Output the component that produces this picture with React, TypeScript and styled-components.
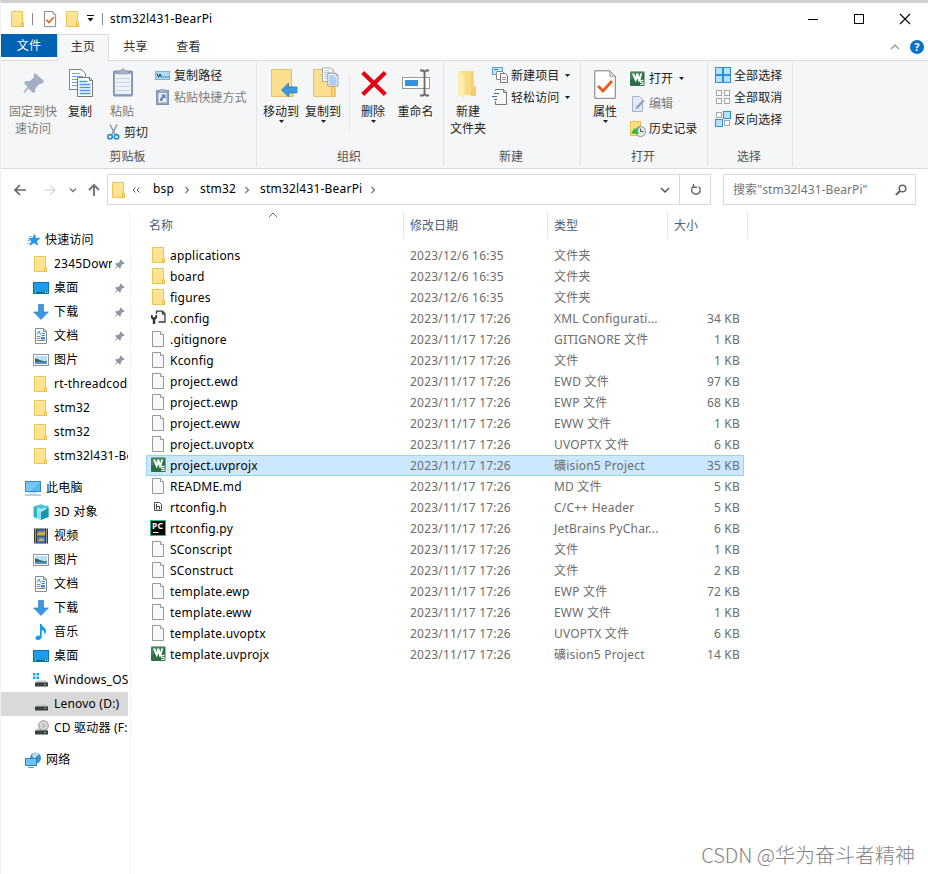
import React from 'react';
import styled, { createGlobalStyle, css } from 'styled-components';

const Global = createGlobalStyle`
  * { box-sizing: border-box; }
  body {
    margin: 0;
    background: #fff;
    font: 12px/17px "Noto Sans", "Noto Sans CJK SC", sans-serif;
    letter-spacing: 0.2px;
    color: #000;
    overflow: hidden;
  }
`;

/* ---------- icons ---------- */

const Svg = styled.svg`
  display: block;
  flex: none;
  overflow: visible;
`;

type IconProps = { w?: number; h?: number };

const FolderIcon = ({ w = 16, h = 16 }: IconProps) => (
  <Svg width={w} height={h} viewBox="0 0 16 16">
    <path d="M1.5.5h11v10.2l1 .6v4.2h-12z" fill="#ffe392" stroke="#edc44e" />
    <path d="M2 1h10v2H2z" fill="#ffe9a8" />
    <path d="M11.5 15.5v-4l1-1 1 1v4z" fill="#ffe08a" stroke="#e9bd43" />
  </Svg>
);

const FileIcon = () => (
  <Svg width={16} height={16} viewBox="0 0 16 16">
    <path d="M1.5.5h8l3 3v12h-11z" fill="#f8f9fa" stroke="#999" />
    <path d="M9.500.5v3h3" fill="#fff" stroke="#999" />
  </Svg>
);

const ConfigIcon = () => (
  <Svg width={16} height={16} viewBox="0 0 16 16">
    <path d="M5.500 4V1.200h6L14 3.700V12H7.500" fill="#f5f5f5" stroke="#3c3c3c" strokeWidth="1.300" />
    <path d="M10.800 1v3.400H14z" fill="#3c3c3c" />
    <path d="M0 5v2.200C0 9 1.800 9.600 1.800 9.600V14h2.400V9.600S6 9 6 7.200V5L4.300 5v2.200H1.700V5z" fill="#333" />
  </Svg>
);

const KeilIcon = () => (
  <Svg width={16} height={16} viewBox="0 0 16 16">
    <rect x="0" y="0.500" width="14.500" height="14.500" rx="1" fill="#2c6e45" />
    <path d="M0 1h14.500L9 6 0 9z" fill="#5b9570" opacity=".55" />
    <path d="M2 2.500h2.300l1 3.800L6.300 2.500h2L9.300 6.300l1-3.800h2L10.300 9 8.800 11.500 7.300 7.300 5.800 11.500z" fill="#fff" />
    <path d="M13.500 9.300h-3v2h2.500v2.200h-3" fill="none" stroke="#e8f3ea" strokeWidth="1.200" />
  </Svg>
);

const HeaderFileIcon = () => (
  <Svg width={16} height={16} viewBox="0 0 16 16">
    <path d="M3.500 3.500h5l2 2v6h-7z" fill="#fff" stroke="#4f4f4f" />
    <path d="M5.500 5v5.500M5.500 7.500h3v3" fill="none" stroke="#3f3f3f" />
  </Svg>
);

const IconText = styled.text`
  font-family: "Noto Sans", sans-serif;
  letter-spacing: 0;
`;

const PyCharmIcon = () => (
  <Svg width={16} height={16} viewBox="1 0 16 16">
    <rect x="0.500" y="0.500" width="15" height="15" fill="#000" stroke="#21c58b" />
    <IconText x="2" y="8.800" fontSize="8.500" fontWeight="700" fill="#fff" textLength="11">PC</IconText>
    <path d="M3 12.500h5.500" stroke="#fff" />
  </Svg>
);

const PinIcon = () => (
  <Svg width={11} height={11} viewBox="0 0 11 11">
    <path d="M6.500.5 10.500 4.300 9.700 5 8.800 4.900 6.900 6.900 6.700 8.900 5.800 9.600 3.600 7.500.7 10.500.3 10.200 3 7 1.200 5.100 1.900 4.300 4.200 4.100 6 2.200 5.800 1.200z" fill="#8b97a3" />
  </Svg>
);

const StarIcon = () => (
  <Svg width={16} height={16} viewBox="-1 0 16 16">
    <path d="M8.300 2.500l1.400 3.700 4.200.1-3.400 2.600 1.200 4.200-3.700-2.400-4 2.600 1.500-4.200L2.600 6.300h4.100z" fill="#1b9af0" stroke="#1280cf" strokeWidth=".6" />
    <path d="M3 4.500h3M1.500 8.500H5M1 11.500h3" stroke="#7fc4f2" />
  </Svg>
);

const DesktopIcon = () => (
  <Svg width={16} height={16} viewBox="0 0 16 16">
    <rect x="0.500" y="2.500" width="15" height="11" fill="#1e9cf4" stroke="#0a6fbe" />
    <path d="M1 12.500h14" stroke="#0f5fa5" />
    <path d="M2 12.500h1M12 12.500h1M14 12.500h1" stroke="#fff" />
  </Svg>
);

const DownloadIcon = () => (
  <Svg width={16} height={16} viewBox="0 0 16 16">
    <path d="M5.500.5h5V8h4.800L8 15.500.7 8h4.800z" fill="#3f97e0" stroke="#2f80c8" strokeWidth=".7" />
  </Svg>
);

const DocIcon = () => (
  <Svg width={16} height={16} viewBox="0 0 16 16">
    <path d="M2.500.5h8l3 3v12h-11z" fill="#fff" stroke="#838b92" />
    <path d="M10.500.5v3h3" fill="none" stroke="#838b92" />
    <path d="M4 6.500l2-3.500 1.500 3.500M8.500 5.500H12M8.500 7.500H12" stroke="#3f8fd0" fill="none" />
    <path d="M4 8.500h3.500M4 10.500h3.500M4 12.500h8" stroke="#7c868f" />
    <path d="M8 9h4v2.500H8z" fill="#3f8fd0" />
  </Svg>
);

const PictureIcon = () => (
  <Svg width={16} height={16} viewBox="0 0 16 16">
    <rect x="0.500" y="2.500" width="15" height="11" fill="#fff" stroke="#8f9499" />
    <path d="M2 4h12v8H2z" fill="#b9dcf4" />
    <path d="M2 6.500c3 0 4 2.500 12 3V12H2z" fill="#2c6470" />
    <path d="M2 10c4-.5 8 0 12 .3V12H2z" fill="#5c94c0" />
  </Svg>
);

const PcIcon = () => (
  <Svg width={17} height={16} viewBox="0 0 17 16">
    <rect x="0.500" y="1.500" width="15" height="10" fill="#54b8f5" stroke="#3d8cc0" />
    <path d="M1 2h14L6 11H1z" fill="#8ad2fa" opacity=".6" />
    <path d="M4 12h8v1.500H4z" fill="#d4dae0" />
    <path d="M0 15h16" stroke="#6a9fc8" />
  </Svg>
);

const CubeIcon = () => (
  <Svg width={16} height={16} viewBox="0 0 16 16">
    <path d="M.5 2.500 8 .5l7.500 2v10.500L8 15.700.5 13z" fill="#2fb4cc" />
    <path d="M.5 2.500 8 .5l7.500 2L8 5z" fill="#4fc5d8" />
    <path d="M4 3.500 8 5l4-1.500 3 2L8 9 4 7z" fill="#a9e8f0" />
    <path d="M4 5.500 8 8v7.700l-4-1.500z" fill="#8fe0ea" />
    <path d="M8 8l7.500-4v9L8 15.700z" fill="#1a93b0" />
  </Svg>
);

const VideoIcon = () => (
  <Svg width={16} height={16} viewBox="0 0 16 16">
    <path d="M1 .5h14v15H1z" fill="#3a3a3a" />
    <path d="M4 1.500h8v6H4z" fill="#3d6fc4" />
    <path d="M4 8.500h8v6H4z" fill="#3f7fd2" />
    <path d="M4 5.500l3-2 2 1 3-2v5H4zM5 12l3-2 3 1v2H6z" fill="#d8a73d" />
    <path d="M2.500 1.500v14M13.500 1.500v14" stroke="#fff" strokeDasharray="1 1" />
  </Svg>
);

const MusicIcon = () => (
  <Svg width={16} height={16} viewBox="0 0 16 16">
    <path d="M7 0h1.600c.3 3 4.900 4 4.400 7.500-.1 1.500-.8 2.500-1.600 3.500.6-2.700-.4-4-2.600-5v6.800C8.800 14.800 7 16 5 16s-2.800-1.200-2.500-2.300C2.800 12 5 11 7 11.600z" fill="#139af0" />
  </Svg>
);

const DriveIcon = ({ kind }: { kind: 'os' | 'disk' | 'cd' }) => (
  <Svg width={16} height={16} viewBox="0 0 16 16">
    {kind === 'os' && <path d="M0 1h2.500v2.500H0zM3.500 1H6v2.500H3.500zM0 4.500h2.500V7H0zM3.500 4.500H6V7H3.500z" fill="#14a8e8" />}
    <path d="M4 8.500h9.500L15 11H2z" fill="#c6c6c6" />
    {kind === 'cd' && (
      <>
        <circle cx="10.500" cy="5.500" r="4.800" fill="#dcdcdc" stroke="#8e8e8e" />
        <circle cx="10.500" cy="5.500" r="1.500" fill="#fff" stroke="#8e8e8e" />
      </>
    )}
    <rect x="2" y="10.500" width="13" height="4" fill="#3b3f42" />
    <path d="M11 12.500h2" stroke="#35e04c" />
  </Svg>
);

const NetworkIcon = () => (
  <Svg width={17} height={16} viewBox="0 0 17 16">
    <circle cx="10.500" cy="6" r="5.500" fill="#3d8fcf" />
    <path d="M7 3c2-3 6-2 7-1-1 2-2 1-3 3s-3 2-4-2z" fill="#b9dff5" />
    <rect x="0.500" y="6.500" width="11" height="7" fill="#6cc3f5" stroke="#2f80bd" />
    <path d="M3 15.500h6" stroke="#5f9cc9" />
  </Svg>
);

const CheckDocIcon = ({ w = 12, h = 15 }: IconProps) => (
  <Svg width={w} height={h} viewBox="0 0 22 29" preserveAspectRatio="none">
    <path d="M.8.8h15l5.500 5.500v22H.8z" fill="#fff" stroke="#7c7c7c" strokeWidth={w < 15 ? 1.700 : 1} />
    <path d="M15.800.8v5.500h5.500z" fill="#ddd" stroke="#8c8c8c" strokeWidth=".8" />
    <path d="M4 16l5 5 9-10" fill="none" stroke="#ea5b1c" strokeWidth="2.800" />
  </Svg>
);

const BigPinIcon = () => (
  <Svg width={32} height={32} viewBox="0 0 32 32">
    <path d="M18 5 27 13 25.500 15.500 22.500 16 18.500 20 18 24 16 25 11.500 20.500 7.500 24.800H6.800V23.500L10.500 19 7 15 8.500 13 13 13 17.500 9 16.500 7z" fill="#a2b0c6" />
  </Svg>
);

const CopyPages = () => (
  <>
    <path d="M1.500 1.500h12l4 4v16h-16z" fill="#fff" stroke="#808080" />
    <path d="M4 5.500h8M4 8.500h11M4 11.500h11M4 14.500h11M4 17.500h11" stroke="#6aa5e8" />
    <path d="M9.500 9.500h12l3 3v16h-15z" fill="#fff" stroke="#777" />
    <path d="M21.500 9.500v3h3" fill="none" stroke="#777" />
    <path d="M11.500 13.500h8M11.500 16.500h11M11.500 19.500h11M11.500 22.500h11M11.500 25.500h11" stroke="#4593ec" strokeWidth="1.300" />
  </>
);

const CopyIcon = () => (
  <Svg width={32} height={32} viewBox="-4 0 32 32"><CopyPages /></Svg>
);

const PasteIcon = () => (
  <Svg width={32} height={32} viewBox="-1 0 32 32">
    <rect x="6.500" y="3" width="19" height="25" rx="1" fill="#8fa2c4" stroke="#7e91b4" />
    <path d="M8 6h16v20H8z" fill="#eef3fb" />
    <path d="M9 10.500h14M9 14.500h14M9 18.500h14M9 22.500h14" stroke="#c9d6ea" />
    <path d="M11 6V3h3c0-3 4-3 4 0h3v3z" fill="#aab3c2" stroke="#8d98aa" strokeWidth=".6" />
  </Svg>
);

const ScissorsIcon = () => (
  <Svg width={13} height={17} viewBox="0 0 13 17">
    <path d="M3 .5 8 10.500M10 .5 5 10.500" stroke="#8c98a3" strokeWidth="1.500" />
    <circle cx="3.100" cy="12.800" r="2.200" fill="none" stroke="#2389c9" strokeWidth="1.600" />
    <circle cx="9.500" cy="12.800" r="2.200" fill="none" stroke="#2389c9" strokeWidth="1.600" />
  </Svg>
);

const PathIcon = () => (
  <Svg width={16} height={16} viewBox="0 0 16 16">
    <rect x="0.500" y="4.500" width="14" height="8" fill="#a9dcf9" stroke="#7fb4d6" />
    <path d="M2 6.500l1.500 4L5 7 6.500 10.500M8 10h1.200M10.300 10h1.200M12.500 10h1.200" fill="none" stroke="#1c3550" />
  </Svg>
);

const ShortcutIcon = () => (
  <Svg width={16} height={16} viewBox="0 0 16 16">
    <rect x="1.500" y="1.500" width="12" height="14" fill="#8fa2c4" stroke="#8093b5" />
    <path d="M3.500 4h8v9.500h-8z" fill="#eef3fa" />
    <path d="M5 3V0h5v3z" fill="#a7b1c2" />
    <path d="M5 12c0-3 .8-4 2.300-4.800L6 5.500h4.500V10L9 8.700C8 9.300 7.500 10 7.500 12z" fill="#6b83b0" />
  </Svg>
);

const BigFolder = () => (
  <>
    <path d="M1.500 1.500h20V18l1.500 1v9.500H1.500z" fill="#fbdf8e" stroke="#e8c35c" />
    <path d="M19.500 28.500V20l1.500-2 2 2v8.500z" fill="#f9d66f" stroke="#e3ba4a" />
  </>
);

const MoveIcon = () => (
  <Svg width={32} height={32} viewBox="-5 0 32 32">
    <BigFolder />
    <path d="M11.500 22 18.500 15v4H27v6h-8.500v4z" fill="#3d97e3" stroke="#2579c2" strokeWidth=".7" />
  </Svg>
);

const CopyToIcon = () => (
  <Svg width={32} height={32} viewBox="-5 0 32 32">
    <BigFolder />
    <g transform="translate(9.500 -1) scale(.67)"><CopyPages /></g>
  </Svg>
);

const DeleteIcon = () => (
  <Svg width={32} height={32} viewBox="-1 0 32 32">
    <path d="M4.700 4.500 27.300 26.500M27.300 4.500 4.700 26.500" stroke="#e30513" strokeWidth="4.300" />
  </Svg>
);

const RenameIcon = () => (
  <Svg width={32} height={32} viewBox="0 0 32 32">
    <rect x="2.500" y="9.500" width="27" height="11" fill="#fff" stroke="#999" />
    <rect x="5" y="12" width="13" height="6" fill="#3193e6" />
    <path d="M20 2.500h3l1.500 1.500L26 2.500h3M24.500 3.500v23M20 27.500h3l1.500-1.500 1.500 1.500h3" fill="none" stroke="#686868" strokeWidth="1.800" />
  </Svg>
);

const NewFolderIcon = () => (
  <Svg width={32} height={32} viewBox="0 0 32 32">
    <path d="M7 3h14v24H7z" fill="#fbdc82" />
    <path d="M19 3h2.500v15H24v10h-5z" fill="#f6cf6b" />
    <path d="M6 3l6.500 3.500V30L6 27z" fill="#ffedb0" />
  </Svg>
);

const NewItemIcon = () => (
  <Svg width={17} height={16} viewBox="0 0 17 16">
    <rect x="0.500" y="0.500" width="10" height="7" fill="#bfe3f8" stroke="#5e9cc4" />
    <path d="M4.500 4.500h6l2 2v6h-8z" fill="#fff" stroke="#8b8b8b" />
    <path d="M8.500 6.500h5l2 2v7h-7z" fill="#fff" stroke="#777" />
    <path d="M10 10.500h4M10 12.500h4" stroke="#e3807d" />
    <path d="M2 2.500h4" stroke="#3485c4" />
  </Svg>
);

const EasyAccessIcon = () => (
  <Svg width={17} height={16} viewBox="0 0 17 16">
    <path d="M3.500 1.500V.5h8l3 3v12h-11V12" fill="#fafafa" stroke="#777" />
    <path d="M11.500.5v3h3" fill="none" stroke="#777" />
    <path d="M2 4.500h5M0 7.500h5M2 10.500h3" stroke="#2e6da9" strokeWidth="1.200" />
  </Svg>
);

const EditIcon = () => (
  <Svg width={16} height={16} viewBox="0 0 16 16">
    <path d="M2.500.5h7l3 3v12h-10z" fill="#e5ebf4" stroke="#a4b1c8" />
    <path d="M5 14 6.500 10.500 13 3.500 14.500 5 8.500 12z" fill="#8ba1c6" />
  </Svg>
);

const HistoryIcon = () => (
  <Svg width={16} height={16} viewBox="0 0 16 16">
    <path d="M.5.5h10v14H.5z" fill="#ffe07e" stroke="#e9c14f" />
    <circle cx="10.500" cy="10.500" r="5" fill="#e7e9ea" stroke="#8b8f93" />
    <path d="M10.500 7.500v3h3" stroke="#555" fill="none" />
    <path d="M1 12.500 4.500 7l1.500 2c1.500-3 4-3.500 5-3.200C8.500 6.500 8 8.500 7.700 11L9.500 13z" fill="#2fb247" />
  </Svg>
);

const gridCells = [[0.5, 0.5], [8.5, 0.5], [0.5, 8.5], [8.5, 8.5]];

const SelectIcon = ({ on }: { on: boolean[] }) => (
  <Svg width={16} height={16} viewBox="0 0 16 16">
    {gridCells.map(([x, y], i) =>
      on[i] ? (
        <rect key={i} x={x} y={y} width="7" height="7" fill="#b4e2fc" stroke="#2e8fdd" />
      ) : (
        <rect key={i} x={x + 1} y={y + 1} width="5" height="5" fill="#fff" stroke="#a6a6a6" />
      ),
    )}
  </Svg>
);

const Chevron = ({ dir, color = '#555', size = 8, stroke = 1.3 }: { dir: 'up' | 'down' | 'right'; color?: string; size?: number; stroke?: number }) => (
  <Svg width={size} height={size} viewBox="0 0 8 8">
    <path
      d={dir === 'up' ? 'M0 6l4-4 4 4' : dir === 'down' ? 'M0 2l4 4 4-4' : 'M2.500 1l3 3-3 3'}
      fill="none"
      stroke={color}
      strokeWidth={stroke}
    />
  </Svg>
);

const Arrow = ({ dir, color }: { dir: 'left' | 'right' | 'up'; color: string }) => (
  <Svg width={14} height={14} viewBox="0 0 14 14">
    <path
      d={dir === 'left' ? 'M13 7H2M7 2 2 7l5 5' : dir === 'right' ? 'M1 7h11M7 2l5 5-5 5' : 'M7 13V2M2 7l5-5 5 5'}
      fill="none"
      stroke={color}
      strokeWidth={dir === 'up' ? 2 : 1.700}
    />
  </Svg>
);

const Caret = () => (
  <Svg width={5} height={3} viewBox="0 0 5 3"><path d="M0 0h5L2.500 3z" fill="#1d1d1d" /></Svg>
);

/* ---------- window frame ---------- */

const Window = styled.div`
  width: 928px;
  height: 874px;
  display: flex;
  flex-direction: column;
  border-top: 3px solid #cfd0d2;
  border-left: 1px solid #f0f0f0;
  background: #fff;
  white-space: nowrap;
`;

const TitleBar = styled.header`
  height: 31px;
  display: flex;
  align-items: center;
  padding-left: 9px;
`;

const TitleDivider = styled.span<{ $gap: string }>`
  width: 1px;
  height: 12px;
  margin: ${(p) => p.$gap};
  background: #8a8a8a;
`;

const Gap = styled.span<{ $w: number }>`
  width: ${(p) => p.$w}px;
`;

const WindowControls = styled.div`
  display: flex;
  margin-left: auto;
`;

const ControlButton = styled.span`
  width: 46px;
  height: 30px;
  display: grid;
  place-items: center;
`;

const Tabs = styled.nav`
  height: 27px;
  display: flex;
  align-items: flex-start;
  border-bottom: 1px solid #dadbdc;
`;

const Tab = styled.span<{ $kind?: 'file' | 'active' }>`
  width: 53px;
  height: 24px;
  line-height: 26px;
  text-align: center;
  color: #333;
  ${(p) => p.$kind === 'file' && css`
    width: 56px;
    height: 23px;
    line-height: 24px;
    background: #0063b1;
    color: #fff;
  `}
  ${(p) => p.$kind === 'active' && css`
    width: 52px;
    height: 27px;
    background: #f5f6f7;
    border: 1px solid #dadbdc;
    border-bottom: 0;
    line-height: 24px;
  `}
`;

const TabTools = styled.div`
  display: flex;
  align-items: center;
  gap: 11px;
  height: 26px;
  margin: 0 4px 0 auto;
`;

const HelpBadge = styled.span`
  width: 14px;
  height: 14px;
  border-radius: 50%;
  background: #0a70cc;
  color: #fff;
  font-weight: 700;
  font-size: 11px;
  line-height: 14px;
  text-align: center;
`;

const Ribbon = styled.section`
  height: 108px;
  display: flex;
  background: #f5f6f7;
  border-bottom: 1px solid #dadbdc;
`;

const Group = styled.div<{ $w: number }>`
  width: ${(p) => p.$w}px;
  height: 103px;
  margin-top: 2px;
  display: flex;
  flex-direction: column;
  border-right: 1px solid #e2e3e4;
`;

const GroupBody = styled.div<{ $pad: number }>`
  height: 85px;
  display: flex;
  align-items: flex-start;
  padding-left: ${(p) => p.$pad}px;
`;

const GroupLabel = styled.span`
  padding-right: 2px;
  text-align: center;
  color: #505050;
  letter-spacing: 0;
`;

const Big = styled.div<{ $w: number; $off?: boolean }>`
  width: ${(p) => p.$w}px;
  flex: none;
  display: flex;
  flex-direction: column;
  align-items: center;
  padding-top: 5px;
  letter-spacing: 0;
  text-align: center;
  color: ${(p) => (p.$off ? '#7a7a7a' : '#222')};
`;

const BigLabel = styled.span`
  margin-top: 3px;
  white-space: pre;
`;

const SmallList = styled.div<{ $top: number; $row: number }>`
  display: grid;
  grid-auto-rows: ${(p) => p.$row}px;
  align-items: center;
  padding-top: ${(p) => p.$top}px;
`;

const Small = styled.div<{ $off?: boolean; $gap?: number }>`
  display: flex;
  align-items: center;
  gap: ${(p) => p.$gap ?? 3}px;
  letter-spacing: 0.1px;
  color: ${(p) => (p.$off ? '#7a7a7a' : '#222')};
`;

const PasteColumn = styled.div`
  width: 54px;
  flex: none;
  display: flex;
  flex-direction: column;
`;

const CutRow = styled.div`
  display: flex;
  align-items: center;
  gap: 4px;
  height: 18px;
  margin-top: 3px;
  padding-left: 6px;
  letter-spacing: 0;
  color: #222;
`;

const ButtonDivider = styled.span<{ $gap: string }>`
  width: 1px;
  height: 55px;
  margin: ${(p) => p.$gap};
  background: #e2e3e4;
`;

/* ---------- address row ---------- */

const AddressRow = styled.div`
  height: 42px;
  display: flex;
  align-items: flex-start;
  padding: 5px 12px 0 12px;
`;

const NavButtons = styled.div`
  width: 94px;
  height: 31px;
  display: flex;
  align-items: center;
`;

const AddressBox = styled.div`
  width: 604px;
  height: 31px;
  display: flex;
  align-items: center;
  border: 1px solid #d9d9d9;
  padding-left: 3px;
`;

const Crumb = styled.span<{ $w: number }>`
  width: ${(p) => p.$w}px;
  padding-bottom: 2px;
`;

const BoxTools = styled.div`
  margin-left: auto;
  height: 29px;
  display: flex;
  align-items: center;
  gap: 10px;
`;

const Refresh = styled.span`
  width: 31px;
  height: 29px;
  display: grid;
  place-items: center;
  border-left: 1px solid #d9d9d9;
`;

const SearchBox = styled.div`
  width: 193px;
  height: 31px;
  margin-left: 12px;
  padding: 0 8px 0 9px;
  display: flex;
  align-items: center;
  justify-content: space-between;
  border: 1px solid #d9d9d9;
  letter-spacing: 0.08px;
  color: #757575;
`;

/* ---------- body ---------- */

const Body = styled.div`
  flex: 1;
  display: flex;
`;

const Sidebar = styled.aside`
  width: 130px;
  padding-top: 17px;
  border-right: 1px solid #f3f3f3;
  overflow: hidden;
`;

const Section = styled.div`
  margin-bottom: 8px;
`;

const SideRow = styled.div<{ $root?: boolean; $active?: boolean }>`
  width: 127px;
  height: 24px;
  display: flex;
  align-items: center;
  gap: ${(p) => (p.$root ? 4 : 5)}px;
  padding-left: ${(p) => (p.$root ? 24 : 32)}px;
  overflow: hidden;
  background: ${(p) => (p.$active ? '#d9d9d9' : 'transparent')};
`;

const SideText = styled.span<{ $pinned?: boolean }>`
  padding-bottom: 1px;
  overflow: hidden;
  ${(p) => p.$pinned && css`
    width: 58px;
    flex: none;
    margin-right: -3px;
  `}
`;

const Main = styled.main`
  flex: 1;
  padding-left: 15px;
  position: relative;
`;

const HeaderRow = styled.div`
  width: 602px;
  height: 28px;
  display: grid;
  grid-template-columns: 258px 144px 120px 80px;
  color: #4c607a;
`;

const HeaderCell = styled.span<{ $first?: boolean }>`
  border-right: 1px solid #e5e5e5;
  padding: 6px 0 0 ${(p) => (p.$first ? 3 : 6)}px;
  letter-spacing: 0;
`;

const SortMark = styled.span`
  position: absolute;
  left: 138px;
  top: 0;
`;

const Rows = styled.div`
  padding-top: 6px;
`;

const Row = styled.div<{ $selected?: boolean }>`
  width: 598px;
  height: 21px;
  display: grid;
  grid-template-columns: 257px 144px 120px 73px;
  align-items: center;
  box-shadow: ${(p) => (p.$selected ? 'inset 0 0 0 1px #99d1ff' : 'none')};
  background: ${(p) => (p.$selected ? '#cce8ff' : 'transparent')};
`;

const NameCell = styled.span`
  display: flex;
  align-items: flex-start;
  gap: 3px;
  padding: 2px 0 0 5px;
  height: 21px;
`;

const MetaCell = styled.span<{ $right?: boolean }>`
  padding-left: 7px;
  color: #6d6d6d;
  text-align: ${(p) => (p.$right ? 'right' : 'left')};
`;

const Watermark = styled.div`
  position: absolute;
  right: 13px;
  bottom: 4px;
  font: 300 20px/30px "Noto Sans CJK SC", sans-serif;
  letter-spacing: 0;
  color: #858585;
`;

/* ---------- data ---------- */

type SideItem = { label: string; icon: React.ReactNode; pinned?: boolean; active?: boolean };
type SideSection = { label: string; icon: React.ReactNode; items: SideItem[] };

const sections: SideSection[] = [
  {
    label: '快速访问',
    icon: <StarIcon />,
    items: [
      { label: '2345Downloads', icon: <FolderIcon />, pinned: true },
      { label: '桌面', icon: <DesktopIcon />, pinned: true },
      { label: '下载', icon: <DownloadIcon />, pinned: true },
      { label: '文档', icon: <DocIcon />, pinned: true },
      { label: '图片', icon: <PictureIcon />, pinned: true },
      { label: 'rt-threadcode', icon: <FolderIcon /> },
      { label: 'stm32', icon: <FolderIcon /> },
      { label: 'stm32', icon: <FolderIcon /> },
      { label: 'stm32l431-BearPi', icon: <FolderIcon /> },
    ],
  },
  {
    label: '此电脑',
    icon: <PcIcon />,
    items: [
      { label: '3D 对象', icon: <CubeIcon /> },
      { label: '视频', icon: <VideoIcon /> },
      { label: '图片', icon: <PictureIcon /> },
      { label: '文档', icon: <DocIcon /> },
      { label: '下载', icon: <DownloadIcon /> },
      { label: '音乐', icon: <MusicIcon /> },
      { label: '桌面', icon: <DesktopIcon /> },
      { label: 'Windows_OS', icon: <DriveIcon kind="os" /> },
      { label: 'Lenovo (D:)', icon: <DriveIcon kind="disk" />, active: true },
      { label: 'CD 驱动器 (F:)', icon: <DriveIcon kind="cd" /> },
    ],
  },
  { label: '网络', icon: <NetworkIcon />, items: [] },
];

const icons = {
  folder: <FolderIcon />,
  file: <FileIcon />,
  config: <ConfigIcon />,
  keil: <KeilIcon />,
  header: <HeaderFileIcon />,
  pycharm: <PyCharmIcon />,
};

const D1 = '2023/12/6 16:35';
const D2 = '2023/11/17 17:26';

const files: [keyof typeof icons, string, string, string, string][] = [
  ['folder', 'applications', D1, '文件夹', ''],
  ['folder', 'board', D1, '文件夹', ''],
  ['folder', 'figures', D1, '文件夹', ''],
  ['config', '.config', D2, 'XML Configurati...', '34 KB'],
  ['file', '.gitignore', D2, 'GITIGNORE 文件', '1 KB'],
  ['file', 'Kconfig', D2, '文件', '1 KB'],
  ['file', 'project.ewd', D2, 'EWD 文件', '97 KB'],
  ['file', 'project.ewp', D2, 'EWP 文件', '68 KB'],
  ['file', 'project.eww', D2, 'EWW 文件', '1 KB'],
  ['file', 'project.uvoptx', D2, 'UVOPTX 文件', '6 KB'],
  ['keil', 'project.uvprojx', D2, '礦ision5 Project', '35 KB'],
  ['file', 'README.md', D2, 'MD 文件', '5 KB'],
  ['header', 'rtconfig.h', D2, 'C/C++ Header', '5 KB'],
  ['pycharm', 'rtconfig.py', D2, 'JetBrains PyChar...', '6 KB'],
  ['file', 'SConscript', D2, '文件', '1 KB'],
  ['file', 'SConstruct', D2, '文件', '2 KB'],
  ['file', 'template.ewp', D2, 'EWP 文件', '72 KB'],
  ['file', 'template.eww', D2, 'EWW 文件', '1 KB'],
  ['file', 'template.uvoptx', D2, 'UVOPTX 文件', '6 KB'],
  ['keil', 'template.uvprojx', D2, '礦ision5 Project', '14 KB'],
];

/* ---------- views ---------- */

type BigButtonProps = { icon: React.ReactNode; label: string; w: number; off?: boolean; menu?: boolean };

const BigButton = ({ icon, label, w, off, menu }: BigButtonProps) => (
  <Big $w={w} $off={off}>
    {icon}
    <BigLabel>{label}</BigLabel>
    {menu && <Caret />}
  </Big>
);

const IconFrame = styled.span`
  width: 32px;
  height: 32px;
  display: grid;
  place-items: center;
`;

const PropertiesIcon = () => (
  <IconFrame><CheckDocIcon w={22} h={29} /></IconFrame>
);

const RibbonView = () => (
  <Ribbon>
    <Group $w={256}>
      <GroupBody $pad={6}>
        <BigButton icon={<BigPinIcon />} label={'固定到快\n速访问'} w={52} off />
        <BigButton icon={<CopyIcon />} label="复制" w={42} />
        <PasteColumn>
          <BigButton icon={<PasteIcon />} label="粘贴" w={42} off />
          <CutRow><ScissorsIcon />剪切</CutRow>
        </PasteColumn>
        <SmallList $top={1} $row={22}>
          <Small><PathIcon />复制路径</Small>
          <Small $off><ShortcutIcon />粘贴快捷方式</Small>
        </SmallList>
      </GroupBody>
      <GroupLabel>剪贴板</GroupLabel>
    </Group>
    <Group $w={187}>
      <GroupBody $pad={3}>
        <BigButton icon={<MoveIcon />} label="移动到" w={42} menu />
        <BigButton icon={<CopyToIcon />} label="复制到" w={42} menu />
        <ButtonDivider $gap="13px 2px 0 5px" />
        <BigButton icon={<DeleteIcon />} label="删除" w={42} menu />
        <BigButton icon={<RenameIcon />} label="重命名" w={43} />
      </GroupBody>
      <GroupLabel>组织</GroupLabel>
    </Group>
    <Group $w={137}>
      <GroupBody $pad={3}>
        <BigButton icon={<NewFolderIcon />} label={'新建\n文件夹'} w={42} />
        <SmallList $top={1} $row={22}>
          <Small $gap={2}><Gap $w={1} /><NewItemIcon />新建项目<Gap $w={2} /><Caret /></Small>
          <Small $gap={2}><Gap $w={1} /><EasyAccessIcon />轻松访问<Gap $w={2} /><Caret /></Small>
        </SmallList>
      </GroupBody>
      <GroupLabel>新建</GroupLabel>
    </Group>
    <Group $w={127}>
      <GroupBody $pad={3}>
        <BigButton icon={<PropertiesIcon />} label="属性" w={42} menu />
        <SmallList $top={3} $row={25}>
          <Small><Gap $w={1} /><KeilIcon />打开<Gap $w={0} /><Caret /></Small>
          <Small $off><Gap $w={1} /><EditIcon />编辑</Small>
          <Small><Gap $w={1} /><HistoryIcon />历史记录</Small>
        </SmallList>
      </GroupBody>
      <GroupLabel>打开</GroupLabel>
    </Group>
    <Group $w={85}>
      <GroupBody $pad={7}>
        <SmallList $top={1} $row={22}>
          <Small><SelectIcon on={[true, true, true, true]} />全部选择</Small>
          <Small><SelectIcon on={[false, false, false, false]} />全部取消</Small>
          <Small><SelectIcon on={[false, true, true, false]} />反向选择</Small>
        </SmallList>
      </GroupBody>
      <GroupLabel>选择</GroupLabel>
    </Group>
  </Ribbon>
);

export default function App() {
  return (
    <Window>
      <Global />
      <TitleBar>
        <FolderIcon />
        <TitleDivider $gap="0 11px 0 6px" />
        <CheckDocIcon w={12} h={16} />
        <Gap $w={9} />
        <FolderIcon />
        <Gap $w={6} />
        <Svg width={7} height={7} viewBox="0 0 7 7">
          <path d="M0 .5h7" stroke="#111" /><path d="M.5 3h6l-3 3.500z" fill="#111" />
        </Svg>
        <TitleDivider $gap="0 7px 0 8px" />
        <span>stm32l431-BearPi</span>
        <WindowControls>
          <ControlButton><Svg width={10} height={10}><path d="M0 5.500h10" stroke="#000" /></Svg></ControlButton>
          <ControlButton><Svg width={10} height={10}><rect x=".5" y=".5" width="9" height="9" fill="none" stroke="#000" /></Svg></ControlButton>
          <ControlButton><Svg width={10} height={10}><path d="M0 0l10 10M10 0 0 10" stroke="#000" strokeWidth="1.100" /></Svg></ControlButton>
        </WindowControls>
      </TitleBar>
      <Tabs>
        <Tab $kind="file">文件</Tab>
        <Tab $kind="active">主页</Tab>
        <Tab>共享</Tab>
        <Tab>查看</Tab>
        <TabTools>
          <Chevron dir="up" color="#999" />
          <HelpBadge>?</HelpBadge>
        </TabTools>
      </Tabs>
      <RibbonView />
      <AddressRow>
        <NavButtons>
          <Arrow dir="left" color="#666" />
          <Gap $w={16} />
          <Arrow dir="right" color="#ddd" />
          <Gap $w={13} />
          <Chevron dir="down" color="#777" size={6} stroke={1.800} />
          <Gap $w={11} />
          <Arrow dir="up" color="#777" />
        </NavButtons>
        <AddressBox>
          <FolderIcon />
          <Gap $w={5} />
          <Svg width={8} height={6} viewBox="0 0 8 6"><path d="M3.500.5 1 3l2.500 2.500M7.500.5 5 3l2.500 2.500" fill="none" stroke="#666" /></Svg>
          <Gap $w={13} />
          <Crumb $w={30}>bsp</Crumb>
          <Chevron dir="right" color="#777" />
          <Gap $w={9} />
          <Crumb $w={43}>stm32</Crumb>
          <Chevron dir="right" color="#777" />
          <Gap $w={9} />
          <Crumb $w={109}>stm32l431-BearPi</Crumb>
          <Chevron dir="right" color="#777" />
          <BoxTools>
            <Chevron dir="down" color="#555" stroke={1.500} />
            <Refresh>
              <Svg width={12} height={12} viewBox="-1 0 12 12">
                <path d="M3 2.800a4.300 4.300 0 1 0 5.500-.3M3.500 0v3.300H7" fill="none" stroke="#666" strokeWidth="1.400" />
              </Svg>
            </Refresh>
          </BoxTools>
        </AddressBox>
        <SearchBox>
          搜索"stm32l431-BearPi"
          <Svg width={12} height={12} viewBox="0 0 12 12">
            <circle cx="7.500" cy="4.500" r="3.300" fill="none" stroke="#666" strokeWidth="1.500" />
            <path d="M5 7 .8 11" stroke="#666" strokeWidth="2" />
          </Svg>
        </SearchBox>
      </AddressRow>
      <Body>
        <Sidebar>
          {sections.map((section) => (
            <Section key={section.label}>
              <SideRow $root>{section.icon}<SideText>{section.label}</SideText></SideRow>
              {section.items.map((item, i) => (
                <SideRow key={i} $active={item.active}>
                  {item.icon}
                  <SideText $pinned={item.pinned}>{item.label}</SideText>
                  {item.pinned && <PinIcon />}
                </SideRow>
              ))}
            </Section>
          ))}
        </Sidebar>
        <Main>
          <SortMark><Chevron dir="up" color="#666" stroke={1} /></SortMark>
          <HeaderRow>
            <HeaderCell $first>名称</HeaderCell>
            <HeaderCell>修改日期</HeaderCell>
            <HeaderCell>类型</HeaderCell>
            <HeaderCell>大小</HeaderCell>
          </HeaderRow>
          <Rows>
            {files.map(([icon, name, date, type, size]) => (
              <Row key={name} $selected={name === 'project.uvprojx'}>
                <NameCell>{icons[icon]}{name}</NameCell>
                <MetaCell>{date}</MetaCell>
                <MetaCell>{type}</MetaCell>
                <MetaCell $right>{size}</MetaCell>
              </Row>
            ))}
          </Rows>
          <Watermark>CSDN @华为奋斗者精神</Watermark>
        </Main>
      </Body>
    </Window>
  );
}
